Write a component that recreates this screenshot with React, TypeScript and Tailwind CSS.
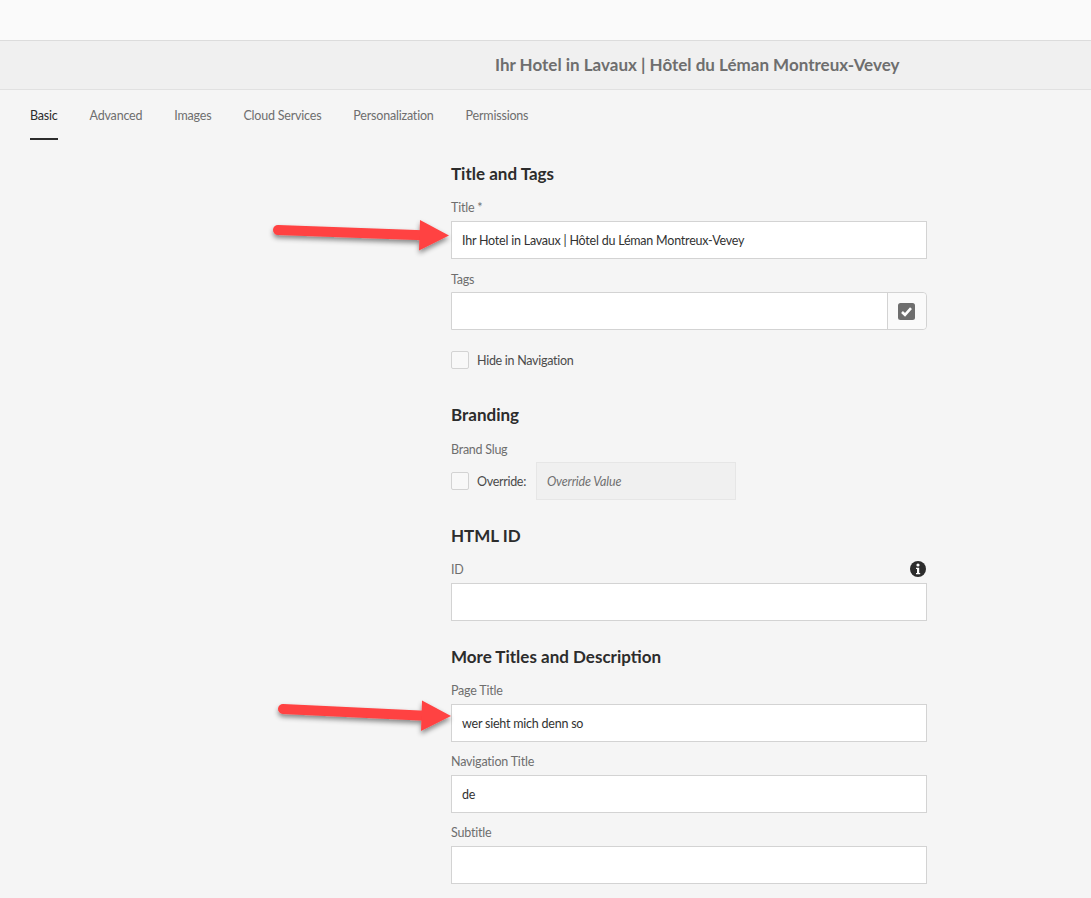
import React from "react";

const Label = ({ children }: { children: React.ReactNode }) => (
  <div className="h-5 mb-1 text-[12.5px] leading-[22px] tracking-[-0.2px] text-[#6e6e6e]">{children}</div>
);

const Input = ({ value }: { value?: string }) => (
  <div className="h-[38px] w-full border border-[#d3d3d3] bg-white px-[10px] text-[12.5px] leading-[37px] tracking-[-0.22px] text-[#323232]">
    {value}
  </div>
);

const Field = ({ label, value, last }: { label: string; value?: string; last?: boolean }) => (
  <div className={last ? "" : "mb-[9px]"}>
    <Label>{label}</Label>
    <Input value={value} />
  </div>
);

const Heading = ({ children }: { children: React.ReactNode }) => (
  <h2 className="h-6 mb-[11px] text-[17px] font-bold leading-6 text-[#2c2c2c]">{children}</h2>
);

const Checkbox = () => <div className="h-[18px] w-[18px] shrink-0 rounded-[2px] border border-[#d3d3d3] bg-[#f8f8f8]" />;

const Arrow = ({ x1, y1, x2, y2, id }: { x1: number; y1: number; x2: number; y2: number; id: string }) => {
  const dy = y2 - y1;
  const tip = `${x2},${y2} ${x2 - 29},${y2 - 15.5} ${x2 - 30},${y2 + 15}`;
  return (
    <g filter={`url(#${id})`}>
      <line x1={x1} y1={y1} x2={x2 - 26} y2={y1 + dy * 0.97} stroke="#ff4242" strokeWidth="10" strokeLinecap="round" />
      <polygon points={tip} fill="#ff4242" />
    </g>
  );
};

const tabs = ["Basic", "Advanced", "Images", "Cloud Services", "Personalization", "Permissions"];

export default function App() {
  return (
    <div className="relative h-[898px] overflow-hidden bg-[#f5f5f5] font-['Lato','Liberation_Sans',sans-serif]">
      <div className="h-[41px] border-b border-[#dcdcdc] bg-[#fafafa]" />
      <div className="h-[49px] border-b border-[#e1e1e1] bg-[#f0f0f0] pl-[495px] text-[17px] font-bold leading-[48px] text-[#6e6e6e]">
        Ihr Hotel in Lavaux | Hôtel du Léman Montreux-Vevey
      </div>
      <nav className="flex h-[50px] gap-8 pl-[30px]">
        {tabs.map((t, i) => (
          <div
            key={t}
            className={
              i === 0
                ? "h-[50px] border-b-2 border-[#2c2c2c] text-[12.5px] leading-[51px] tracking-[-0.2px] text-[#2c2c2c]"
                : "h-[50px] text-[12.5px] leading-[51px] tracking-[-0.2px] text-[#6e6e6e]"
            }
          >
            {t}
          </div>
        ))}
      </nav>

      <main className="ml-[451px] w-[476px] pt-[22px]">
        <Heading>Title and Tags</Heading>
        <Field label="Title *" value="Ihr Hotel in Lavaux | Hôtel du Léman Montreux-Vevey" />
        <div className="mb-[3px] h-[21px] text-[12.5px] leading-6 tracking-[-0.2px] text-[#6e6e6e]">Tags</div>
        <div className="flex h-[38px] rounded-r-[4px] border border-[#d3d3d3] bg-white">
          <div className="flex-1" />
          <div className="flex w-[39px] items-center justify-center rounded-r-[4px] border-l border-[#d3d3d3] bg-[#fafafa] pr-0.5">
            <svg width="17" height="17" viewBox="0 0 17 17">
              <rect width="17" height="17" rx="2.5" fill="#6e6e6e" />
              <path d="M4 9 7 11.8 13 5.2" fill="none" stroke="#fff" strokeWidth="2.6" />
            </svg>
          </div>
        </div>
        <div className="mt-[21px] flex h-[18px] items-center gap-2 text-[12.5px] leading-5 tracking-[-0.28px] text-[#4b4b4b]">
          <Checkbox />
          <span className="pt-0.5">Hide in Navigation</span>
        </div>

        <div className="mt-[34px]">
          <h2 className="mb-3 h-6 text-[17px] font-bold leading-6 text-[#2c2c2c]">Branding</h2>
          <div className="mb-[3px] h-5 text-[12.5px] leading-[22px] tracking-[-0.25px] text-[#6e6e6e]">Brand Slug</div>
          <div className="flex h-[38px] items-center text-[12.5px] tracking-[-0.3px] text-[#4b4b4b]">
            <Checkbox />
            <span className="ml-2 w-[59px] pt-0.5">Override:</span>
            <div className="h-[38px] w-[200px] border border-[#e6e6e6] bg-[#f0f0f0] px-[10px] text-[12.5px] italic leading-[38px] tracking-[-0.15px] text-[#707070]">
              Override Value
            </div>
          </div>
        </div>

        <div className="mt-6">
          <Heading>HTML ID</Heading>
          <div className="mb-1 flex h-5 items-center justify-between text-[12.5px] tracking-[-0.2px] text-[#6e6e6e]">
            <span className="pt-0.5">ID</span>
            <svg width="16" height="16" viewBox="0 0 16 16" className="mr-[1.5px]">
              <circle cx="8" cy="8" r="8" fill="#2c2c2c" />
              <circle cx="8" cy="4" r="1.6" fill="#fff" />
              <path d="M6 6.7h3.2v5.2h1v1.3H6v-1.3h1v-3.9H6z" fill="#fff" />
            </svg>
          </div>
          <Input />
        </div>

        <div className="mt-6">
          <Heading>More Titles and Description</Heading>
          <Field label="Page Title" value="wer sieht mich denn so" />
          <Field label="Navigation Title" value="de" />
          <Field label="Subtitle" last />
        </div>
      </main>

      <svg className="pointer-events-none absolute left-0 top-0" width="1091" height="898">
        <defs>
          <filter id="s1" x="-10%" y="-60%" width="120%" height="220%">
            <feDropShadow dx="0" dy="3" stdDeviation="2.5" floodColor="#000" floodOpacity="0.45" />
          </filter>
        </defs>
        <Arrow id="s1" x1={278} y1={230} x2={449} y2={235.5} />
        <Arrow id="s1" x1={283} y1={709} x2={451} y2={716} />
      </svg>
    </div>
  );
}
